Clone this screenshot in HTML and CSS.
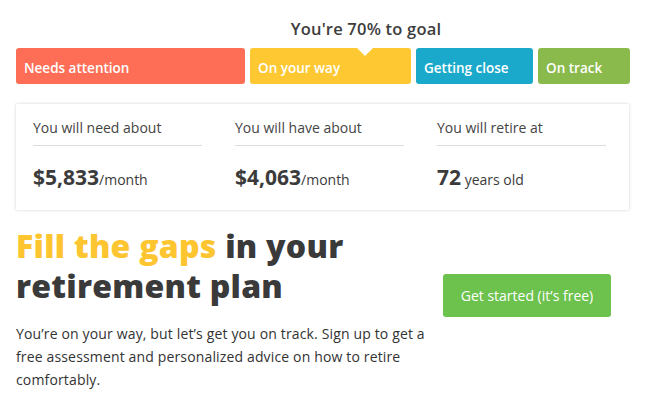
FILE: index.html
```html
<!DOCTYPE html>
<html>
<head>
<meta charset="utf-8">
<link rel="stylesheet" href="styles.css">
</head>
<body>
<div class="page">
  <div class="goal-title">You're 70% to goal</div>
  <div class="bar">
    <div class="seg seg-red">Needs attention</div>
    <div class="seg seg-yellow">On your way</div>
    <div class="seg seg-blue">Getting close</div>
    <div class="seg seg-green">On track</div>
  </div>
  <div class="card">
    <div class="stat">
      <div class="stat-label">You will need about</div>
      <div class="stat-value"><span class="num">$5,833</span><span class="unit">/month</span></div>
    </div>
    <div class="stat">
      <div class="stat-label">You will have about</div>
      <div class="stat-value"><span class="num">$4,063</span><span class="unit">/month</span></div>
    </div>
    <div class="stat stat-last">
      <div class="stat-label">You will retire at</div>
      <div class="stat-value"><span class="num">72</span><span class="unit"> years old</span></div>
    </div>
  </div>
  <div class="cta">
    <div class="cta-text">
      <h1 class="headline"><span class="hl">Fill the gaps</span> in your retirement plan</h1>
      <p class="desc">You’re on your way, but let’s get you on track. Sign up to get a free assessment and personalized advice on how to retire comfortably.</p>
    </div>
    <div class="cta-action">
      <a class="btn">Get started (it’s free)</a>
    </div>
  </div>
</div>
</body>
</html>
```
FILE: styles.css
```css
html, body {
  margin: 0;
  padding: 0;
  background: #ffffff;
}
body {
  font-family: "Open Sans", Lato, sans-serif;
  color: #3b3b3b;
}
.page {
  padding: 18px 17px 0 16px;
}
.goal-title {
  width: 300px;
  margin-left: 200px;
  text-align: center;
  font-size: 16.5px;
  font-weight: 600;
  line-height: 22px;
  color: #3d3d3d;
  letter-spacing: 0.2px;
}
.bar {
  display: flex;
  gap: 5px;
  margin-top: 8px;
  height: 36px;
}
.seg {
  position: relative;
  box-sizing: border-box;
  border-radius: 3px;
  color: #ffffff;
  font-size: 13.5px;
  font-weight: 600;
  line-height: 16px;
  padding: 12px 0 0 8px;
}
.seg-red { background: #fe6e56; flex: 0 0 229px; }
.seg-yellow { background: #fec833; flex: 0 0 161px; }
.seg-blue { background: #1aa9ca; flex: 0 0 117px; }
.seg-green { background: #8aba4b; flex: 0 0 92px; }
.seg-yellow::before {
  content: "";
  position: absolute;
  top: 0;
  left: 107px;
  border-left: 8px solid transparent;
  border-right: 8px solid transparent;
  border-top: 8px solid #ffffff;
}
.card {
  display: flex;
  margin-top: 20px;
  height: 106px;
  box-sizing: border-box;
  padding: 15px 0 0 17px;
  background: #ffffff;
  box-shadow: 0 0 3px rgba(0,0,0,0.18);
}
.stat {
  flex: 0 0 202px;
}
.stat-last {
  flex: 1 1 auto;
}
.stat-label {
  width: 169px;
  font-size: 14px;
  line-height: 18px;
  padding-bottom: 8px;
  border-bottom: 1px solid #dcdcdc;
  color: #444;
}
.stat-value {
  margin-top: 17px;
  line-height: 28px;
  color: #3b3b3b;
}
.num {
  font-size: 21px;
  font-weight: 700;
}
.unit {
  font-size: 14px;
}
.cta {
  display: flex;
  margin-top: 16px;
}
.cta-text {
  width: 420px;
  flex: 0 0 420px;
}
.headline {
  margin: 0;
  font-size: 32px;
  font-weight: 800;
  line-height: 40px;
  color: #3a3a3a;
  letter-spacing: 0.25px;
  width: 360px;
}
.hl {
  color: #fdc52f;
}
.desc {
  margin: 16px 0 0 0;
  font-size: 14px;
  line-height: 23px;
  color: #333;
  letter-spacing: 0.15px;
}
.cta-action {
  padding-top: 48px;
  padding-left: 7px;
}
.btn {
  display: flex;
  align-items: center;
  justify-content: center;
  width: 168px;
  height: 43px;
  background: #6cc24d;
  border-radius: 3px;
  color: #ffffff;
  font-size: 14px;
}
```
